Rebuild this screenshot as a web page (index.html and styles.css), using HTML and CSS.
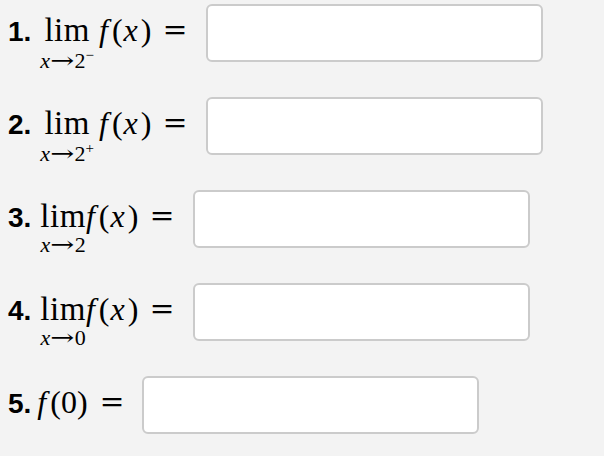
FILE: index.html
```html
<!DOCTYPE html>
<html>
<head>
<meta charset="utf-8">
<link rel="stylesheet" href="styles.css">
</head>
<body>
<div class="list">
  <div class="row">
    <div class="label">
      <span class="num">1.</span>
      <span class="lim gap"><span class="op">lim</span><span class="under"><span class="v">x</span><span class="arr">→</span>2<span class="sup">−</span></span></span>
      <span class="fx gap"><span class="f">f</span>(<span class="v">x</span>)</span>
      <span class="eq">=</span>
    </div>
    <div class="box"></div>
  </div>
  <div class="row">
    <div class="label">
      <span class="num">2.</span>
      <span class="lim gap"><span class="op">lim</span><span class="under"><span class="v">x</span><span class="arr">→</span>2<span class="sup">+</span></span></span>
      <span class="fx gap"><span class="f">f</span>(<span class="v">x</span>)</span>
      <span class="eq">=</span>
    </div>
    <div class="box"></div>
  </div>
  <div class="row">
    <div class="label">
      <span class="num">3.</span>
      <span class="lim"><span class="op">lim</span><span class="under"><span class="v">x</span><span class="arr">→</span>2</span></span>
      <span class="fx"><span class="f">f</span>(<span class="v">x</span>)</span>
      <span class="eq">=</span>
    </div>
    <div class="box"></div>
  </div>
  <div class="row">
    <div class="label">
      <span class="num">4.</span>
      <span class="lim"><span class="op">lim</span><span class="under"><span class="v">x</span><span class="arr">→</span>0</span></span>
      <span class="fx"><span class="f">f</span>(<span class="v">x</span>)</span>
      <span class="eq">=</span>
    </div>
    <div class="box"></div>
  </div>
  <div class="row">
    <div class="label">
      <span class="num">5.</span>
      <span class="fx solo"><span class="f">f</span>(0)</span>
      <span class="eq">=</span>
    </div>
    <div class="box"></div>
  </div>
</div>
</body>
</html>
```
FILE: styles.css
```css
html, body {
  margin: 0;
  background: #f3f3f3;
}
.list {
  display: flex;
  flex-direction: column;
  gap: 35px;
  padding: 4px 8px;
}
.row {
  display: flex;
  align-items: flex-start;
  height: 58px;
}
.label {
  display: flex;
  align-items: baseline;
  margin-top: 10px;
  font-family: "Liberation Serif", "DejaVu Serif", serif;
  font-size: 32px;
  line-height: 1;
  color: #000;
}
.num {
  font-family: "Liberation Sans", Arial, sans-serif;
  font-weight: bold;
  font-size: 28px;
  margin-right: 9px;
}
.lim {
  display: inline-flex;
  flex-direction: column;
  align-items: center;
}
.lim.gap {
  margin-right: 5px;
}
.op {
  font-size: 33px;
  line-height: 32px;
  letter-spacing: 0.5px;
}
.under {
  font-size: 22px;
  line-height: 1;
  margin-top: 2px;
  white-space: nowrap;
}
.v, .f {
  font-style: italic;
}
.arr {
  font-family: "DejaVu Serif", serif;
  display: inline-block;
  transform: scaleX(1.3);
  margin: 0 3px;
}
.sup {
  font-size: 15px;
  vertical-align: 8px;
}
.fx {
  white-space: nowrap;
}
.fx.solo {
  margin-left: -3px;
}
.fx .v {
  margin: 0 3px 0 1px;
}
.fx .f {
  margin-right: 4px;
}
.eq {
  margin-left: 15px;
  display: inline-block;
  transform: scaleX(1.25);
  font-weight: bold;
}
.box {
  box-sizing: border-box;
  width: 337px;
  height: 58px;
  margin-left: 21px;
  background: #fff;
  border: 2px solid #cbcbcb;
  border-radius: 6px;
}
```
